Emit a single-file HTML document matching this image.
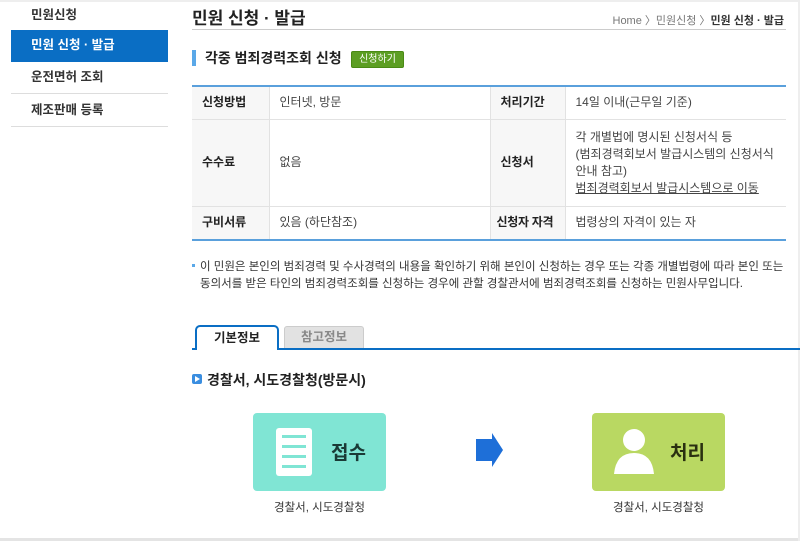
<!DOCTYPE html>
<html><head><meta charset="utf-8"><style>
*{margin:0;padding:0;box-sizing:border-box}
body{width:800px;height:541px;background:#fff;font-family:"Liberation Sans","Noto Sans CJK KR",sans-serif;color:#333;position:relative;overflow:hidden;font-size:12px}
.a{position:absolute}
.side div{position:absolute;left:11px;width:157px;height:32px;line-height:31px;padding-left:20px;font-weight:bold;font-size:12.5px;color:#333;border-bottom:1px solid #ddd}
table{position:absolute;left:192px;top:85px;width:594px;border-collapse:collapse;border-top:2px solid #5aa0dc;border-bottom:2px solid #5aa0dc;table-layout:fixed}
td{border-bottom:1px solid #e2e2e2;border-right:1px solid #e2e2e2;padding:0 10px;font-size:12px;color:#444;vertical-align:middle;line-height:17px}
td.h{background:#f7f7f7;font-weight:bold;color:#222;white-space:nowrap}
td:last-child{border-right:none}
</style></head><body>
<div class="a" style="left:0;top:0;width:800px;height:2px;background:#eee"></div>
<div class="a" style="left:0;top:538px;width:800px;height:3px;background:#e4e4e4"></div>
<div class="a" style="right:0;top:0;width:2px;height:541px;background:#eee"></div>
<div class="side">
<div style="top:0;border-bottom:none">민원신청</div>
<div style="top:30px;background:#0a6ec4;color:#fff;border:none;height:32px">민원 신청 · 발급</div>
<div style="top:62px">운전면허 조회</div>
<div style="top:95px">제조판매 등록</div>
</div>
<div class="a" style="left:192px;top:4px;font-size:17px;font-weight:bold;color:#222">민원 신청 · 발급</div>
<div class="a" style="right:16px;top:12px;font-size:11px;color:#777">Home 〉민원신청 〉<b style="color:#333">민원 신청 · 발급</b></div>
<div class="a" style="left:192px;top:29px;width:594px;height:1px;background:#ccc"></div>
<div class="a" style="left:192px;top:50px;width:4px;height:16px;background:#5aa8e8"></div>
<div class="a" style="left:205px;top:48px;font-size:14px;font-weight:bold;color:#222">각중 범죄경력조회 신청</div>
<div class="a" style="left:351px;top:51px;width:53px;height:17px;background:#5c9e23;border:1px solid #4a8a15;color:#fff;font-size:10px;text-align:center;line-height:15px;border-radius:2px">신청하기</div>
<table>
<colgroup><col style="width:77px"><col style="width:221px"><col style="width:75px"><col></colgroup>
<tr style="height:33px"><td class="h">신청방법</td><td>인터넷, 방문</td><td class="h">처리기간</td><td>14일 이내(근무일 기준)</td></tr>
<tr style="height:87px"><td class="h">수수료</td><td>없음</td><td class="h">신청서</td><td>각 개별법에 명시된 신청서식 등<br>(범죄경력회보서 발급시스템의 신청서식<br>안내 참고)<br><u>범죄경력회보서 발급시스템으로 이동</u></td></tr>
<tr style="height:34px"><td class="h">구비서류</td><td>있음 (하단참조)</td><td class="h" style="padding:0 6px;letter-spacing:-0.3px">신청자 자격</td><td>법령상의 자격이 있는 자</td></tr>
</table>
<div class="a" style="left:192px;top:264px;width:3px;height:3px;background:#5aa8e8"></div>
<div class="a" style="left:200px;top:259px;font-size:11.5px;line-height:17px;color:#333;width:600px">이 민원은 본인의 범죄경력 및 수사경력의 내용을 확인하기 위해 본인이 신청하는 경우 또는 각종 개별법령에 따라 본인 또는<br>동의서를 받은 타인의 범죄경력조회를 신청하는 경우에 관할 경찰관서에 범죄경력조회를 신청하는 민원사무입니다.</div>
<div class="a" style="left:192px;top:348px;width:608px;height:2px;background:#0a6ec4"></div>
<div class="a" style="left:195px;top:325px;width:84px;height:25px;border:2px solid #0a6ec4;border-bottom:none;border-radius:5px 5px 0 0;background:#fff;text-align:center;line-height:22px;font-weight:bold;font-size:12.5px;color:#222">기본정보</div>
<div class="a" style="left:284px;top:326px;width:80px;height:22px;background:#e2e2e2;border:1px solid #ccc;border-bottom:none;border-radius:3px 3px 0 0;text-align:center;line-height:21px;font-size:12.5px;color:#888;font-weight:bold">참고정보</div>
<div class="a" style="left:192px;top:374px;width:10px;height:10px;background:#3a8ee0;border-radius:2px"></div>
<div class="a" style="left:195px;top:376px;width:0;height:0;border-left:5px solid #fff;border-top:3px solid transparent;border-bottom:3px solid transparent"></div>
<div class="a" style="left:207px;top:370px;font-size:14px;font-weight:bold;color:#222">경찰서, 시도경찰청(방문시)</div>
<div class="a" style="left:253px;top:413px;width:133px;height:78px;background:#80e5d4;border-radius:4px"></div>
<div class="a" style="left:276px;top:428px;width:36px;height:48px;background:#fff;border-radius:3px"></div>
<div class="a" style="left:282px;top:435px;width:24px;height:3px;background:#80e5d4;box-shadow:0 10px 0 #80e5d4,0 20px 0 #80e5d4,0 30px 0 #80e5d4"></div>
<div class="a" style="left:331px;top:438px;font-size:19px;font-weight:bold;color:#1a3a36">접수</div>
<svg class="a" style="left:476px;top:433px" width="27" height="35"><polygon points="0,6 16,6 16,0 27,17 16,34 16,28 0,28" fill="#1e6fd8"/></svg>
<div class="a" style="left:592px;top:413px;width:133px;height:78px;background:#b9d862;border-radius:4px"></div>
<svg class="a" style="left:613px;top:428px" width="42" height="48"><circle cx="21" cy="12" r="11" fill="#fff"/><path d="M1 46 Q3 25 21 25 Q39 25 41 46 Z" fill="#fff"/></svg>
<div class="a" style="left:670px;top:438px;font-size:19px;font-weight:bold;color:#2a3010">처리</div>
<div class="a" style="left:253px;top:499px;width:133px;text-align:center;font-size:11.5px;color:#333">경찰서, 시도경찰청</div>
<div class="a" style="left:592px;top:499px;width:133px;text-align:center;font-size:11.5px;color:#333">경찰서, 시도경찰청</div>
</body></html>
